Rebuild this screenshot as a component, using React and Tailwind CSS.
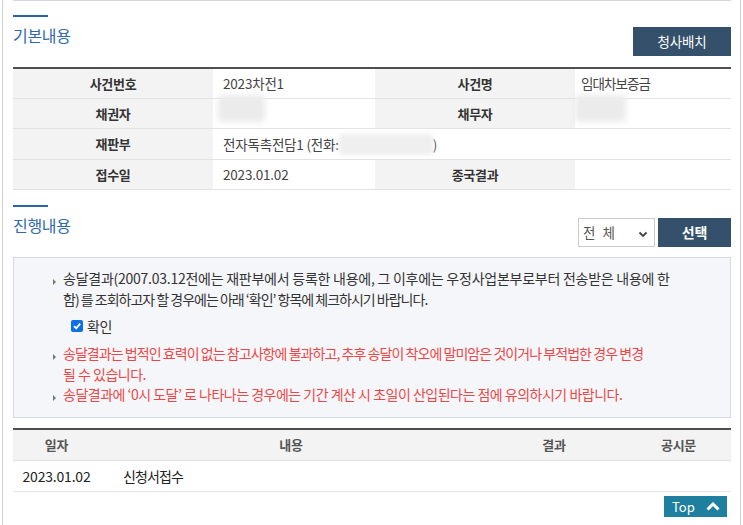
const Tri = () => (
  <span className="shrink-0 w-[10px] flex justify-start pt-[11px]">
    <span className="block w-0 h-0 border-y-[3px] border-y-transparent border-l-[3px] border-l-[#777]" />
  </span>
);

function Blur({ className }) {
  return <div className={"absolute bg-[#ebebeb] blur-[3px] rounded " + className} />;
}

const label = "bg-[#f3f3f3] flex items-center justify-center font-bold text-[13px] tracking-[-0.3px] text-[#333]";

export default function App() {
  return (
    <div className="w-[743px] h-[525px] bg-white overflow-hidden">
      <div className="ml-[2px] w-[739px] h-[525px] border-x border-[#cfcfcf] pl-[10px] pr-[9px] font-['Noto_Sans_CJK_KR',sans-serif] text-[13.5px] tracking-[-0.2px] text-[#444]">
        <div className="border-t border-[#d6d6d6]">
          {/* Section 1 header */}
          <div className="flex justify-between h-[66px]">
            <div>
              <div className="mt-[14px] w-[35px] h-[2px] bg-[#2a65a8]" />
              <h2 className="mt-[8px] text-[16px] leading-[20px] tracking-[-0.3px] text-[#2d69ab]">기본내용</h2>
            </div>
            <button className="mt-[26px] w-[98px] h-[29px] bg-[#34506a] text-white text-[13.5px] leading-[29px]">청사배치</button>
          </div>

          {/* Basic table */}
          <div className="border-t-2 border-[#4f4f4f]">
            <div className="grid grid-cols-[200px_162px_200px_156px] h-[30px] border-b border-[#e2e2e2]">
              <div className={label}>사건번호</div>
              <div className="flex items-center pl-[10px]">2023차전1</div>
              <div className={label}>사건명</div>
              <div className="flex items-center pl-[6px] tracking-[-0.9px]">임대차보증금</div>
            </div>
            <div className="grid grid-cols-[200px_162px_200px_156px] h-[30px] border-b border-[#e2e2e2]">
              <div className={label}>채권자</div>
              <div className="relative">
                <Blur className="left-[5px] top-[-4px] w-[47px] h-[27px]" />
              </div>
              <div className={label}>채무자</div>
              <div className="relative">
                <Blur className="left-[0px] top-[-4px] w-[51px] h-[27px]" />
              </div>
            </div>
            <div className="grid grid-cols-[200px_518px] h-[31px] border-b border-[#e2e2e2]">
              <div className={label}>재판부</div>
              <div className="flex items-center pl-[10px]">
                <span>전자독촉전담1 (전화:</span>
                <span className="inline-block w-[94px] h-[21px] bg-[#efefef] blur-[2px] rounded" />
                <span>)</span>
              </div>
            </div>
            <div className="grid grid-cols-[200px_162px_200px_156px] h-[30px] border-b border-[#e2e2e2]">
              <div className={label}>접수일</div>
              <div className="flex items-center pl-[10px]">2023.01.02</div>
              <div className={label}>종국결과</div>
              <div />
            </div>
          </div>

          {/* Section 2 header */}
          <div className="flex justify-between h-[67px]">
            <div>
              <div className="mt-[15px] w-[35px] h-[2px] bg-[#2a65a8]" />
              <h2 className="mt-[8px] text-[16px] leading-[20px] tracking-[-0.3px] text-[#2d69ab]">진행내용</h2>
            </div>
            <div className="mt-[28px] flex gap-[3px] h-[29px]">
              <div className="w-[77px] h-[29px] border border-[#cccccc] bg-white flex items-center justify-between pl-[4px] pr-[6px] text-[#555]">
                <span className="tracking-[2px]">전 체</span>
                <svg width="10" height="7" viewBox="0 0 10 7" className="mt-[3px]">
                  <polyline points="1.5,1.5 5,5 8.5,1.5" fill="none" stroke="#444" strokeWidth="1.8" />
                </svg>
              </div>
              <button className="w-[73px] h-[29px] bg-[#34506a] text-white text-[14px] font-semibold leading-[29px]">선택</button>
            </div>
          </div>

          {/* Info box */}
          <div className="h-[161px] border border-[#d6d9e1] bg-[#f5f6fa] pl-[39px] pt-[10px] text-[#333] text-[14px] leading-[21px]">
            <div className="flex">
              <Tri />
              <div>
                <div className="whitespace-nowrap tracking-[-0.25px]">송달결과(2007.03.12전에는 재판부에서 등록한 내용에, 그 이후에는 우정사업본부로부터 전송받은 내용에 한</div>
                <div className="whitespace-nowrap tracking-[-1px]">함) 를 조회하고자 할 경우에는 아래 ‘확인’ 항목에 체크하시기 바랍니다.</div>
              </div>
            </div>
            <div className="flex items-center h-[22px] mt-[5px] pl-[18px]">
              <span className="w-[12px] h-[12px] rounded-[2px] bg-[#0b6fe6] flex items-center justify-center">
                <svg width="10" height="10" viewBox="0 0 10 10">
                  <polyline points="2,5.2 4.2,7.4 8.2,2.6" fill="none" stroke="white" strokeWidth="1.8" />
                </svg>
              </span>
              <span className="ml-[4px] tracking-[-0.5px]">확인</span>
            </div>
            <div className="flex mt-[6px] text-[#ee4646]">
              <Tri />
              <div>
                <div className="whitespace-nowrap tracking-[-0.95px]">송달결과는 법적인 효력이 없는 참고사항에 불과하고, 추후 송달이 착오에 말미암은 것이거나 부적법한 경우 변경</div>
                <div className="whitespace-nowrap tracking-[-0.5px]">될 수 있습니다.</div>
              </div>
            </div>
            <div className="flex text-[#ee4646] -mt-[1px]">
              <Tri />
              <div className="whitespace-nowrap tracking-[-0.5px]">송달결과에 ‘0시 도달’ 로 나타나는 경우에는 기간 계산 시 초일이 산입된다는 점에 유의하시기 바랍니다.</div>
            </div>
          </div>

          {/* Progress table */}
          <div className="mt-[10px] border-t-2 border-[#4f4f4f]">
            <div className="grid grid-cols-[87px_382px_144px_105px] h-[31px] border-b border-[#e0e0e0] bg-[#f3f3f3] font-bold text-[13px] tracking-[-0.3px] text-[#555]">
              <div className="flex items-center justify-center">일자</div>
              <div className="flex items-center justify-center">내용</div>
              <div className="flex items-center justify-center">결과</div>
              <div className="flex items-center justify-center">공시문</div>
            </div>
            <div className="grid grid-cols-[87px_382px_144px_105px] h-[31px] border-b border-[#e6e6e6] text-[#222] text-[14px]">
              <div className="flex items-center justify-center">2023.01.02</div>
              <div className="flex items-center pl-[23px] tracking-[-0.9px]">신청서접수</div>
              <div />
              <div />
            </div>
          </div>

          <div className="flex justify-end pr-[4px] mt-[4px]">
            <button className="w-[63px] h-[21px] bg-[#1f7f9f] text-white flex items-center justify-between pl-[8px] pr-[7px] text-[13px] leading-[21px] tracking-normal">
              <span>Top</span>
              <svg width="14" height="9" viewBox="0 0 14 9">
                <polyline points="1.5,7.5 7,2 12.5,7.5" fill="none" stroke="white" strokeWidth="3" />
              </svg>
            </button>
          </div>
        </div>
      </div>
    </div>
  );
}
